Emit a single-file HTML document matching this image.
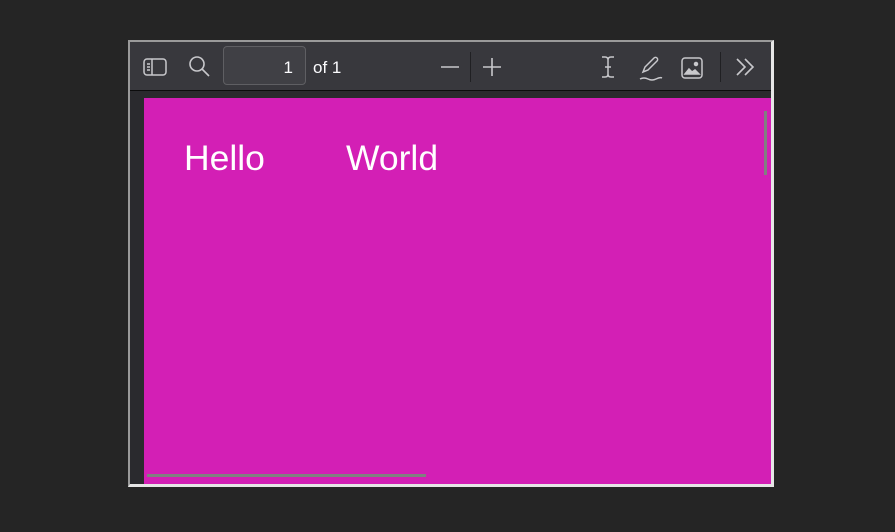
<!DOCTYPE html>
<html><head><style>
*{margin:0;padding:0;box-sizing:border-box}
body{width:895px;height:532px;background:#252525;position:relative;overflow:hidden;font-family:"Liberation Sans",sans-serif}
.frame{position:absolute;left:128px;top:40px;width:646px;height:447px;background:#2a2a2e;border-top:2px solid #9a9a9a;border-left:2px solid #9a9a9a;border-right:3px solid #e6e6e6;border-bottom:3px solid #e6e6e6}
.tb{position:absolute;left:0;top:0;right:0;height:49px;background:#38383d;border-bottom:1px solid #0c0c0d}
.page{position:absolute;left:14px;top:56px;right:0;bottom:0;background:#d31fb5}
.t{position:absolute;color:#fff;font-size:35.5px;top:40px}
svg{position:absolute}
.inp{position:absolute;left:93px;top:4px;width:83px;height:39px;border:1px solid #5f5f63;border-radius:4px;background:#404045;color:#fbfbfe;font-size:17px;text-align:right;padding:12px 12px 0 0;line-height:1}
.of{position:absolute;left:183px;top:17px;color:#fbfbfe;font-size:17px;line-height:1}
.sep{position:absolute;top:10px;width:1px;height:30px;background:#202023}
</style></head><body>
<div class="frame">
<div class="tb">
<svg style="left:12px;top:14px" width="26" height="22" viewBox="0 0 26 22" fill="none" stroke="#c8c8cc" stroke-width="1.5"><rect x="2" y="3" width="22" height="16" rx="3"/><line x1="10" y1="3" x2="10" y2="19"/><line x1="5" y1="8" x2="8" y2="8"/><line x1="5" y1="11" x2="8" y2="11"/><line x1="5" y1="14" x2="8" y2="14"/></svg>
<svg style="left:58px;top:13px" width="24" height="24" viewBox="0 0 24 24" fill="none" stroke="#c8c8cc" stroke-width="1.6"><circle cx="9" cy="9" r="7"/><line x1="14" y1="14" x2="21" y2="21"/></svg>
<div class="inp">1</div>
<div class="of">of 1</div>
<svg style="left:309px;top:14px" width="22" height="22"><line x1="2" y1="11" x2="20" y2="11" stroke="#c8c8cc" stroke-width="1.6"/></svg>
<div class="sep" style="left:340px"></div>
<svg style="left:351px;top:14px" width="22" height="22" stroke="#c8c8cc" stroke-width="1.6"><line x1="2" y1="11" x2="20" y2="11"/><line x1="11" y1="2" x2="11" y2="20"/></svg>
<svg style="left:469px;top:13px" width="18" height="26" fill="none" stroke="#c8c8cc" stroke-width="1.5"><path d="M3 2h3q3 0 3 3v14q0 3 3 3h3M15 2h-3q-3 0-3 3M9 19q0 3-3 3H3M6 12h6"/></svg>
<svg style="left:508px;top:13px" width="26" height="26" fill="none" stroke="#c8c8cc" stroke-width="1.5"><path d="M5 17l2-5 9-9a2 2 0 0 1 3 3l-9 9z"/><path d="M2 24q4-2 8 0t8 0 6-1"/></svg>
<svg style="left:551px;top:15px" width="22" height="22" fill="none" stroke="#c8c8cc" stroke-width="1.5"><rect x="1" y="1" width="20" height="20" rx="3"/><path d="M4 17l4-5 3 3 3-2 4 4z" fill="#c8c8cc"/><circle cx="15" cy="7" r="1.5" fill="#c8c8cc"/></svg>
<div class="sep" style="left:590px"></div>
<svg style="left:605px;top:15px" width="22" height="20" fill="none" stroke="#c8c8cc" stroke-width="1.6"><path d="M2 2l8 8-8 8M10 2l8 8-8 8"/></svg>
</div>
<div class="page">
<div class="t" style="left:40px">Hello</div>
<div class="t" style="left:202px">World</div>
<div style="position:absolute;left:3px;top:376px;width:279px;height:3px;background:#808080"></div>
<div style="position:absolute;left:620px;top:13px;width:3px;height:64px;background:#808080"></div>
</div>
</div>
</body></html>
